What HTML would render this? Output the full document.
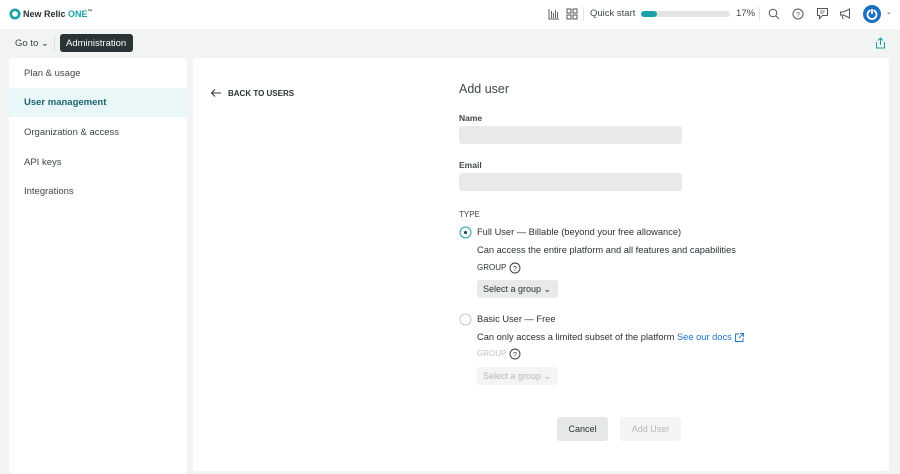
<!DOCTYPE html>
<html><head><meta charset="utf-8"><style>
*{margin:0;padding:0;box-sizing:border-box}
body{width:900px;height:474px;overflow:hidden;background:#f2f3f3;font-family:"Liberation Sans",sans-serif;color:#293338;position:relative}
.a{position:absolute;white-space:nowrap}
.top{position:absolute;left:0;top:0;width:900px;height:29px;background:#fff}
.panel{position:absolute;background:#fff;border-radius:3px}
.nav{font-size:9.5px;color:#3d474c}
.in{position:absolute;left:459px;width:223px;height:18px;background:#e8e9e9;border-radius:3px}
.sm{font-size:9.3px}
</style></head><body>
<div class="top"></div>
<svg class="a" style="left:9px;top:8px" width="12" height="12"><circle cx="6" cy="6" r="4.2" fill="none" stroke="#1ca0a8" stroke-width="2.6"/></svg>
<div class="a" style="left:23px;top:9px;font-size:9px;font-weight:bold;color:#2a3336">New Relic <span style="color:#1ca0a8">ONE</span><sup style="font-size:5px">™</sup></div>
<svg class="a" style="left:548px;top:8px" width="12" height="12"><path d="M1 1v10h10M3.5 3v7M5.5 5v5M7.5 2v8M9.5 4v6" stroke="#555" stroke-width="0.9" fill="none"/></svg>
<svg class="a" style="left:566px;top:8px" width="12" height="12"><g fill="none" stroke="#555" stroke-width="1"><rect x="1" y="1" width="4" height="4"/><rect x="7" y="1" width="4" height="4"/><rect x="1" y="7" width="4" height="4"/><rect x="7" y="7" width="4" height="4"/></g></svg>
<div class="a" style="left:583px;top:7px;width:1px;height:14px;background:#e3e4e4"></div>
<div class="a" style="left:590px;top:8px;font-size:9.5px;color:#3d474c">Quick start</div>
<div class="a" style="left:641px;top:11px;width:89px;height:6px;background:#e3e5e5;border-radius:3px"><div style="width:16px;height:6px;background:#1ca0a8;border-radius:3px"></div></div>
<div class="a" style="left:736px;top:8px;font-size:9.5px;color:#3d474c">17%</div>
<div class="a" style="left:759px;top:7px;width:1px;height:14px;background:#e3e4e4"></div>
<svg class="a" style="left:768px;top:8px" width="12" height="12"><circle cx="5" cy="5" r="3.8" fill="none" stroke="#555" stroke-width="1"/><path d="M8 8l3 3" stroke="#555"/></svg>
<svg class="a" style="left:792px;top:8px" width="12" height="12"><circle cx="6" cy="6" r="5" fill="none" stroke="#555"/><text x="6" y="9" font-size="7" text-anchor="middle" fill="#555" font-family="Liberation Sans">?</text></svg>
<svg class="a" style="left:816px;top:7px" width="13" height="13"><path d="M1.5 1.5h10v7h-5l-3 3v-3h-2z" fill="none" stroke="#555"/><path d="M4 4h5M4 6h4" stroke="#555" stroke-width=".8"/></svg>
<svg class="a" style="left:839px;top:7px" width="13" height="13"><path d="M1.5 5h3l6-3v9l-6-3h-3zM3 8l1 4" fill="none" stroke="#555"/></svg>
<svg class="a" style="left:862px;top:4px" width="20" height="20"><circle cx="10" cy="10" r="9" fill="#1d6fc2"/><circle cx="10" cy="10.5" r="4.5" fill="none" stroke="#fff" stroke-width="1.8"/><path d="M10 4v6" stroke="#1d6fc2" stroke-width="3"/><path d="M10 5v5" stroke="#fff" stroke-width="1.8"/></svg>
<div class="a" style="left:886px;top:8px;font-size:7px;color:#555">⌄</div>
<div class="a" style="left:15px;top:38px;font-size:9.5px;color:#3d474c">Go to ⌄</div>
<div class="a" style="left:54px;top:35px;width:1px;height:16px;background:#dcdede"></div>
<div class="a" style="left:60px;top:34px;width:73px;height:18px;background:#2a3336;border-radius:3px;color:#fff;font-size:9.5px;padding:4px 0 0 6px">Administration</div>
<svg class="a" style="left:875px;top:37px" width="11" height="12"><path d="M1.5 5v6h8V5M5.5 8V1M3 3.5l2.5-2.5 2.5 2.5" fill="none" stroke="#1ca0a8"/></svg>

<div class="panel" style="left:9px;top:58px;width:178px;height:416px"></div>
<div class="a" style="left:9px;top:88px;width:178px;height:29px;background:#eaf7f8"></div>
<div class="a nav" style="left:24px;top:68px">Plan &amp; usage</div>
<div class="a nav" style="left:24px;top:97px;color:#1b6670;font-weight:bold;font-size:9.5px">User management</div>
<div class="a nav" style="left:24px;top:127px">Organization &amp; access</div>
<div class="a nav" style="left:24px;top:157px">API keys</div>
<div class="a nav" style="left:24px;top:186px">Integrations</div>

<div class="panel" style="left:193px;top:58px;width:696px;height:413px"></div>
<svg class="a" style="left:210px;top:88px" width="12" height="10"><path d="M11 5H1.5M5 1.5L1.5 5 5 8.5" fill="none" stroke="#333" stroke-width="1"/></svg>
<div class="a" style="left:228px;top:89px;font-size:8px;font-weight:bold;color:#2a3336">BACK TO USERS</div>

<div class="a" style="left:459px;top:82px;font-size:12.5px;color:#3d474c">Add user</div>
<div class="a" style="left:459px;top:113px;font-size:8.5px;font-weight:bold;color:#3d474c">Name</div>
<div class="in" style="top:126px"></div>
<div class="a" style="left:459px;top:160px;font-size:8.5px;font-weight:bold;color:#3d474c">Email</div>
<div class="in" style="top:173px"></div>
<div class="a" style="left:459px;top:210px;font-size:8px;color:#3d474c">TYPE</div>
<svg class="a" style="left:459px;top:226px" width="13" height="13"><circle cx="6.5" cy="6.5" r="5.5" fill="#fff" stroke="#1ca0a8"/><circle cx="6.5" cy="6.5" r="1.5" fill="#1a3a40"/></svg>
<div class="a sm" style="left:477px;top:227px">Full User — Billable (beyond your free allowance)</div>
<div class="a sm" style="left:477px;top:245px">Can access the entire platform and all features and capabilities</div>
<div class="a" style="left:477px;top:263px;font-size:8px">GROUP</div>
<svg class="a" style="left:509px;top:262px" width="12" height="12"><circle cx="6" cy="6" r="5" fill="none" stroke="#333" stroke-width=".9"/><text x="6" y="9" font-size="7" text-anchor="middle" fill="#333" font-family="Liberation Sans">?</text></svg>
<div class="a" style="left:477px;top:280px;width:81px;height:18px;background:#e8e9e9;border-radius:3px;font-size:9px;line-height:18px;padding-left:6px">Select a group ⌄</div>
<svg class="a" style="left:459px;top:313px" width="13" height="13"><circle cx="6.5" cy="6.5" r="5.5" fill="#fff" stroke="#c4c8c8"/></svg>
<div class="a sm" style="left:477px;top:314px">Basic User — Free</div>
<div class="a sm" style="left:477px;top:332px">Can only access a limited subset of the platform <span style="color:#1d72c9">See our docs</span></div>
<svg class="a" style="left:734px;top:332px" width="11" height="11"><path d="M5 2H1.5v7.5H9V6M6 1.5h3.5V5M9.5 1.5L5 6" fill="none" stroke="#1d72c9" stroke-width=".9"/></svg>
<div class="a" style="left:477px;top:349px;font-size:8px;color:#bfc3c3">GROUP</div>
<svg class="a" style="left:509px;top:348px" width="12" height="12"><circle cx="6" cy="6" r="5" fill="none" stroke="#333" stroke-width=".9"/><text x="6" y="9" font-size="7" text-anchor="middle" fill="#333" font-family="Liberation Sans">?</text></svg>
<div class="a" style="left:477px;top:367px;width:81px;height:18px;background:#f3f4f4;border-radius:3px;font-size:9px;line-height:18px;padding-left:6px;color:#b5b9b9">Select a group ⌄</div>
<div class="a" style="left:557px;top:417px;width:51px;height:24px;background:#e6e7e7;border-radius:3px;font-size:9px;line-height:24px;text-align:center">Cancel</div>
<div class="a" style="left:620px;top:417px;width:61px;height:24px;background:#f3f4f4;border-radius:3px;font-size:9px;line-height:24px;text-align:center;color:#b5b9b9">Add User</div>
</body></html>
